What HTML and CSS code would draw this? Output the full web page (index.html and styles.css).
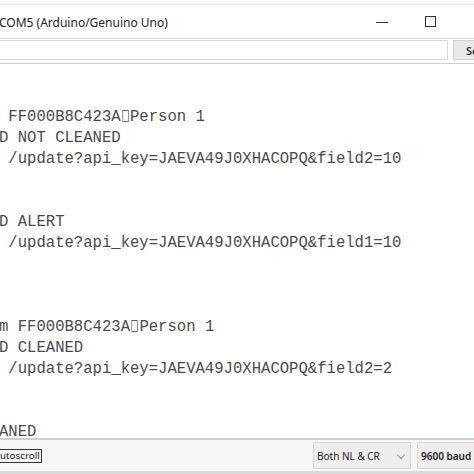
FILE: index.html
```html
<!doctype html>
<html>
<head>
    <meta charset="utf-8">
    <link rel="stylesheet" href="styles.css">
</head>
<body>

<div class="window">
    <div class="titlebar">
        <div class="title">COM5 (Arduino/Genuino Uno)</div>
        <div class="ctrl"><span class="min"></span></div>
        <div class="ctrl"><span class="max"></span></div>
        <div class="ctrl"></div>
    </div>

    <div class="toolbar">
        <input class="send-input" type="text" value="">
        <button class="send-btn">Send</button>
    </div>

<pre class="output">


 FF000B8C423A<span class="box"></span>Person 1
D NOT CLEANED
 /update?api_key=JAEVA49J0XHACOPQ&amp;field2=10


D ALERT
 /update?api_key=JAEVA49J0XHACOPQ&amp;field1=10



m FF000B8C423A<span class="box"></span>Person 1
D CLEANED
 /update?api_key=JAEVA49J0XHACOPQ&amp;field2=2


ANED</pre>

    <div class="statusbar">
        <div class="left">
            <label class="autoscroll">utoscroll</label>
        </div>
        <div class="select ending">Both NL &amp; CR<span class="chev"></span></div>
        <div class="select baud">9600 baud</div>
    </div>
</div>

</body>
</html>
```

FILE: styles.css
```css
html, body {
    margin: 0;
    padding: 0;
    background: #fff;
}

.window {
    width: 474px;
    height: 474px;
    overflow: hidden;
    display: flex;
    flex-direction: column;
    font-family: "Noto Sans", "Open Sans", sans-serif;
    color: #222;
}

.titlebar {
    flex: 0 0 auto;
    margin-top: 4px;
    height: 33px;
    border-top: 1px solid #e4e4e4;
    border-bottom: 1px solid #e0e0e0;
    display: flex;
    align-items: center;
    overflow: hidden;
}

.title {
    flex: 0 0 358px;
    font-size: 12px;
    margin-left: -1px;
    margin-top: 1px;
    white-space: nowrap;
}

.ctrl {
    flex: 0 0 49px;
    height: 100%;
    display: flex;
    align-items: center;
    justify-content: center;
}

.min {
    width: 12px;
    height: 1px;
    background: #333;
    margin-top: 2px;
}

.max {
    width: 9px;
    height: 9px;
    border: 1px solid #333;
    margin-top: -1px;
}

.toolbar {
    flex: 0 0 auto;
    display: flex;
    align-items: center;
    gap: 5px;
    padding: 1px 0 3px;
    border-bottom: 1px solid #cfcfcf;
}

.send-input {
    flex: 0 0 449px;
    box-sizing: border-box;
    height: 20px;
    margin: 0 0 0 -1px;
    border: 1px solid #d9d9d9;
    background: #fff;
    outline: none;
}

.send-btn {
    flex: 0 0 auto;
    box-sizing: border-box;
    height: 20px;
    margin: 0;
    padding: 0 9px 0 12px;
    border: 1px solid #d4d4d4;
    background: #e9e9e9;
    font-family: "Noto Sans", sans-serif;
    font-size: 11px;
    font-weight: 600;
    color: #333;
}

.output {
    flex: 1 1 auto;
    margin: 0 0 0 -1px;
    padding: 1px 0 0;
    font-family: "Liberation Mono", "Courier New", monospace;
    font-size: 15.6px;
    line-height: 21px;
    color: #4a4a4a;
    overflow: hidden;
}

.box {
    display: inline-block;
    width: 0.6em;
    height: 12px;
    box-sizing: border-box;
    border: 1px solid #666;
    vertical-align: -1px;
    transform: scaleX(0.7);
}

.statusbar {
    flex: 0 0 auto;
    height: 31px;
    border-top: 2px solid #cad2d0;
    border-bottom: 3px solid #d6dcda;
    background: #f6f6f6;
    display: grid;
    grid-template-columns: 307px 98px 80px;
    column-gap: 6px;
    align-items: center;
    font-size: 10px;
}

.autoscroll {
    display: inline-block;
    box-sizing: border-box;
    height: 14px;
    line-height: 12px;
    padding: 0 1px 0 0;
    border: 1px solid #333;
    border-left: none;
    font-size: 9.8px;
}

.select {
    box-sizing: border-box;
    height: 27px;
    border: 1px solid #d8d8d8;
    background: #efeded;
    display: flex;
    align-items: center;
    padding-left: 3px;
    white-space: nowrap;
}

.ending {
    position: relative;
}

.chev {
    position: absolute;
    right: 6px;
    top: 9px;
    width: 5px;
    height: 5px;
    border-right: 1px solid #999;
    border-bottom: 1px solid #999;
    transform: rotate(45deg);
}

.baud {
    font-size: 10px;
    font-weight: 600;
}
```
